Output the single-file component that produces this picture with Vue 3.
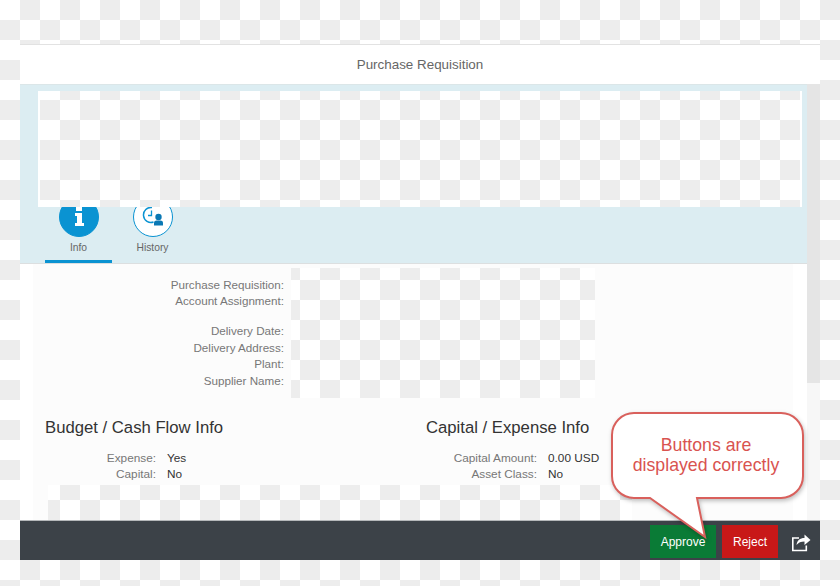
<template>
  <div class="page checker">
    <div class="shell">
      <div class="title">Purchase Requisition</div>

      <div class="body">
        <div class="main">
          <div class="band">
            <div class="hole-wrap"><div class="hero checker"></div></div>
            <div class="tabs">
              <div v-for="t in TABS" :key="t.id" class="tab" :class="{ active: t.id === 'info' }">
                <div class="tab-icon">
                  <svg v-if="t.id === 'info'" width="40" height="40" viewBox="0 0 40 40">
                    <rect x="17" y="8" width="6" height="6" fill="#fff" />
                    <path d="M16 16h7v10h2v3h-9v-3h2v-7h-2z" fill="#fff" />
                  </svg>
                  <svg v-else width="40" height="40" viewBox="0 0 40 40">
                    <path d="M19 10.500a7.500 7.500 0 1 0 1.500 14.500" fill="none" stroke="#0a93d2" stroke-width="1.500" />
                    <path d="M18.500 13.500v5h-3.500" fill="none" stroke="#0a93d2" stroke-width="1.300" />
                    <circle cx="25.500" cy="20" r="3.200" fill="#0a78b4" />
                    <path d="M21 28.500v-2.500c0-1.800 1.500-2.500 2.500-2.500h4c1 0 2.500 .7 2.500 2.500v2.500z" fill="#0a78b4" />
                  </svg>
                </div>
                <div class="tab-label">{{ t.label }}</div>
              </div>
            </div>
          </div>

          <div class="content">
            <div class="inner">
              <div class="form">
                <div class="form-labels">
                  <div v-for="l in FORM_LABELS" :key="l.text" class="form-label" :class="{ spaced: l.spaced }">{{ l.text }}</div>
                </div>
                <div class="form-values checker"></div>
              </div>

              <div class="infos">
                <div v-for="s in SECTIONS" :key="s.title" class="info">
                  <div class="info-title">{{ s.title }}</div>
                  <div v-for="r in s.rows" :key="r[0]" class="info-row">
                    <span class="info-label">{{ r[0] }}</span>
                    <span class="info-val">{{ r[1] }}</span>
                  </div>
                </div>
              </div>

              <div class="rest checker"></div>
            </div>
          </div>
        </div>
        <div class="scrollbar"><div class="thumb"></div></div>
      </div>

      <div class="footer">
        <button class="btn approve">Approve</button>
        <button class="btn reject">Reject</button>
        <svg class="share" width="20" height="20" viewBox="0 0 20 20">
          <path d="M8 5H1.800v12.500h13.500v-5" fill="none" stroke="#fff" stroke-width="1.600" />
          <path d="M5.500 12c.5-4.500 3.500-7 8-7V1.500l6 5.500-6 5V8.500c-3.500 0-6 1-8 3.500z" fill="#fff" />
        </svg>
      </div>
    </div>

    <div class="callout">
      <svg width="204" height="134" viewBox="0 0 204 134">
        <path
          class="callout-shape"
          d="M25 3h147a22 22 0 0 1 22 22v41a22 22 0 0 1-22 22H88l8 39-55-39H25a22 22 0 0 1-22-22V25a22 22 0 0 1 22-22z"
        />
      </svg>
      <div class="callout-text">Buttons are<br />displayed correctly</div>
    </div>
  </div>
</template>

<script setup>
const TABS = [
  { id: 'info', label: 'Info' },
  { id: 'history', label: 'History' },
]

const FORM_LABELS = [
  { text: 'Purchase Requisition:' },
  { text: 'Account Assignment:' },
  { text: 'Delivery Date:', spaced: true },
  { text: 'Delivery Address:' },
  { text: 'Plant:' },
  { text: 'Supplier Name:' },
]

const SECTIONS = [
  { title: 'Budget / Cash Flow Info', rows: [['Expense:', 'Yes'], ['Capital:', 'No']] },
  { title: 'Capital / Expense Info', rows: [['Capital Amount:', '0.00 USD'], ['Asset Class:', 'No']] },
]
</script>

<style scoped>
.checker {
  background-color: #fff;
  background-image: conic-gradient(#ededed 25%, #fff 0 50%, #ededed 0 75%, #fff 0);
  background-size: 40px 40px;
  background-attachment: fixed;
}
.page {
  position: relative; width: 840px; height: 586px; padding-top: 44px; box-sizing: border-box; overflow: hidden;
  font-family: "Liberation Sans", Arial, sans-serif;
}
.shell { width: 800px; margin-left: 20px; }
.title {
  height: 40px; box-sizing: border-box; border-top: 1px solid #e2e2e2; padding-bottom: 1px; background: #fff;
  display: flex; align-items: center; justify-content: center; font-size: 13.4px; color: #666;
}
.body { display: flex; height: 436px; }
.main { width: 787px; display: flex; flex-direction: column; }
.band {
  height: 180px; flex: none; box-sizing: border-box; background: #dcedf2; border-top: 1px solid #dbe6e8; border-bottom: 1px solid #dcdfe0;
  display: flex; flex-direction: column;
}
.hole-wrap { padding: 6px 5px 0 18px; }
.hero { height: 116px; border-left: 2px solid #fff; border-right: 2px solid #fff; box-sizing: border-box; }
.tabs { flex: 1; display: flex; gap: 7px; padding-left: 25px; overflow: hidden; }
.tab { width: 67px; height: 56px; box-sizing: border-box; display: flex; flex-direction: column; align-items: center; }
.tab.active { border-bottom: 3px solid #0a93d2; }
.tab-icon {
  width: 40px; height: 40px; flex: none; margin-top: -10px; border-radius: 50%; box-sizing: border-box;
  background: #fff; border: 1px solid #0a93d2; display: flex; align-items: center; justify-content: center;
}
.tab-icon svg { flex: none; margin: -1px; }
.tab.active .tab-icon { background: #0a93d2; }
.tab-label { margin-top: 4px; font-size: 10.3px; line-height: 14px; color: #666; }
.content { flex: 1; background: #fff; padding: 0 14px 0 13px; min-height: 0; }
.inner { height: 100%; background: #fcfcfc; display: flex; flex-direction: column; }
.form { display: flex; padding-top: 4px; height: 134px; box-sizing: border-box; flex: none; }
.form-labels { width: 251px; margin-right: 7px; padding-top: 8.6px; }
.form-label { font-size: 11.65px; line-height: 16.8px; color: #777; text-align: right; }
.form-label.spaced { margin-top: 12.6px; }
.form-values { width: 304px; height: 130px; }
.infos { display: flex; height: 87px; flex: none; padding: 20px 0 0 12px; box-sizing: border-box; }
.info { width: 381px; flex: none; }
.info-title { font-size: 16.7px; line-height: 20px; color: #333; margin-bottom: 11.6px; }
.info-row { display: flex; font-size: 11.8px; line-height: 16.8px; }
.info-label { width: 111px; text-align: right; color: #777; margin-right: 11px; }
.info-val { color: #333; }
.rest { flex: 1; width: 584px; margin-left: 15px; }
.scrollbar { width: 13px; background: #f7f7f7; }
.thumb { height: 299px; background: #e5e5e5; }
.footer {
  height: 40px; box-sizing: border-box; background: #3c4248; border-top: 1px solid #b5b8ba;
  display: flex; justify-content: flex-end; align-items: flex-start; padding: 4px 9px 0 0;
}
.btn { height: 33px; border: 0; color: #fff; font: 12px "Liberation Sans", Arial, sans-serif; padding: 0; }
.approve { width: 66px; background: #0a7b36; margin-right: 6px; }
.reject { width: 56px; background: #c81818; margin-right: 13px; }
.share { margin-top: 8px; }
.callout { position: absolute; left: 609px; top: 410px; width: 204px; height: 134px; }
.callout svg { display: block; overflow: visible; filter: drop-shadow(1px 2px 2px rgba(0, 0, 0, .25)); }
.callout-shape { fill: #fff; stroke: #d9605c; stroke-width: 2; }
.callout-text {
  position: absolute; left: 0; top: 25px; width: 194px; text-align: center;
  font-size: 17.7px; line-height: 20px; color: #d9534f;
}
</style>
